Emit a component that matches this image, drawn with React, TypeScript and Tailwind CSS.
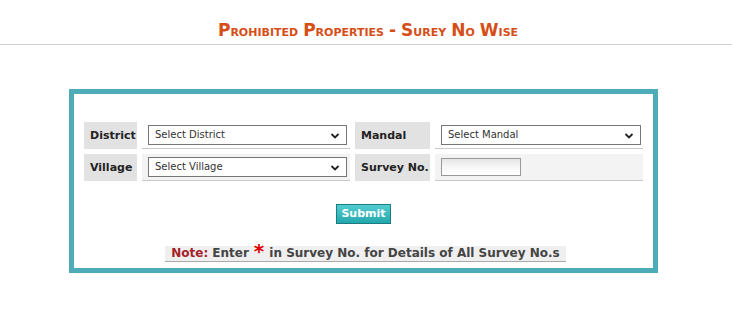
import React from 'react'

const font = { fontFamily: '"DejaVu Sans", Verdana, sans-serif' }

const TITLE = ['Prohibited', 'Properties', '-', 'Surey', 'No', 'Wise']

function Chevron() {
  return (
    <svg width="10" height="8" viewBox="0 0 10 8" className="absolute right-[6px] top-[6px]">
      <path d="M1.5 2 L5 5.5 L8.5 2" fill="none" stroke="#222" strokeWidth="1.8" />
    </svg>
  )
}

function FakeSelect({ label, width }: { label: string; width: string }) {
  return (
    <div className={`relative h-[20px] ${width} border border-[#767676] bg-white pl-[6px] text-[10px] leading-[18px] text-[#333]`}>
      {label}
      <Chevron />
    </div>
  )
}

function Label({ text, width }: { text: string; width: string }) {
  return (
    <div className={`${width} h-[27px] bg-[#e2e2e2] flex items-center pl-[6px] pt-[2px] text-[11px] font-bold text-[#222]`}>
      {text}
    </div>
  )
}

function Value({ children, shaded }: { children: React.ReactNode; shaded?: boolean }) {
  return (
    <div className={`w-[208px] h-[27px] flex items-center pl-[6px] border-b border-[#c8c8c8] ${shaded ? 'bg-[#f3f3f3]' : 'bg-white'}`}>
      {children}
    </div>
  )
}

export default function App() {
  return (
    <div className="w-[732px] h-[332px] bg-white" style={font}>
      <div className="h-[45px] border-b border-[#cfcfcf] flex items-end justify-center pb-[1px]">
        <h1 className="font-bold text-[#d64e17] leading-[20px] ml-[4px] flex gap-[5px] items-baseline">
          {TITLE.map(w => (
            <span key={w}>
              <span className="text-[17px]">{w[0]}</span>
              <span className="text-[11px] uppercase">{w.slice(1)}</span>
            </span>
          ))}
        </h1>
      </div>

      <div className="ml-[69px] mt-[44px] w-[589px] h-[184px] border-[5px] border-[#4eacb9] pt-[28px] px-[10px]">
        <div className="flex flex-col gap-[5px]">
          <div className="flex gap-[5px]">
            <Label text="District" width="w-[53px]" />
            <Value>
              <FakeSelect label="Select District" width="w-[199px]" />
            </Value>
            <Label text="Mandal" width="w-[75px]" />
            <Value>
              <FakeSelect label="Select Mandal" width="w-[200px]" />
            </Value>
          </div>
          <div className="flex gap-[5px]">
            <Label text="Village" width="w-[53px]" />
            <Value shaded>
              <FakeSelect label="Select Village" width="w-[199px]" />
            </Value>
            <Label text="Survey No." width="w-[75px]" />
            <Value shaded>
              <div className="w-[80px] h-[18px] border border-[#999] bg-gradient-to-b from-[#e4e4e4] via-[#f7f7f7] to-white" />
            </Value>
          </div>
        </div>

        <div className="flex justify-center mt-[23px]">
          <button className="w-[55px] h-[20px] border border-[#1b7d80] bg-gradient-to-b from-[#52cdd0] to-[#22a8ad] text-white text-[11px] font-bold leading-[18px]">
            Submit
          </button>
        </div>

        <div className="flex justify-center mt-[22px]">
          <div className="h-[16px] px-[6px] bg-[#efefef] border-b border-[#aaa] flex items-end text-[12px] font-bold leading-[15px] text-[#444] ml-[4px]">
            <span className="text-[#a3232a]">Note:</span>
            <span className="ml-[4px]">Enter</span>
            <span className="ml-[5px] text-[#e00000] text-[20px] leading-[15px] relative top-[-2px]">*</span>
            <span className="ml-[5px]">in Survey No. for Details of All Survey No.s</span>
          </div>
        </div>
      </div>
    </div>
  )
}
